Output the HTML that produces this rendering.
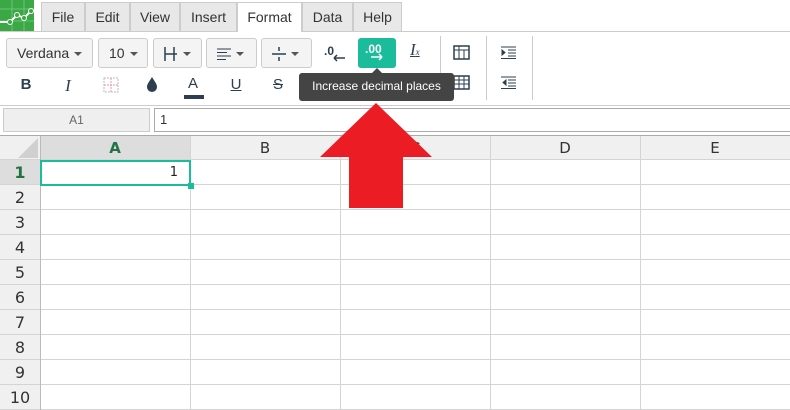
<!DOCTYPE html>
<html><head><style>
*{box-sizing:border-box;margin:0;padding:0}
body{width:790px;height:410px;overflow:hidden;background:#fff;font-family:"Liberation Sans",sans-serif;position:relative}
.a{position:absolute}
.tab{position:absolute;top:2px;height:29px;border:1px solid #ccc;border-bottom:none;background:#e8e8e8;font-size:14px;color:#333;text-align:center;line-height:28px}
.btn{position:absolute;top:38px;height:30px;border:1px solid #ccc;border-radius:3px;background:#f4f4f4;font-size:14px;color:#333;line-height:28px;padding-left:10px}
.car{display:inline-block;border-left:4px solid transparent;border-right:4px solid transparent;border-top:4px solid #555;vertical-align:middle;margin-left:5px}
.ic{position:absolute;font-size:15px;color:#2c3e50;text-align:center;width:20px}
.hl{position:absolute;height:1px;background:#d4d4d4;left:0;width:790px}
.vl{position:absolute;width:1px;background:#d4d4d4;top:136px;height:274px}
.rn{position:absolute;left:0;width:40px;height:25px;font-size:16px;color:#333;text-align:center;line-height:25px;background:#f0f0f0;font-family:"DejaVu Sans",sans-serif}
.cn{position:absolute;top:136px;height:24px;width:150px;font-size:15px;color:#333;text-align:center;line-height:24px;background:#f0f0f0;font-family:"DejaVu Sans",sans-serif}
</style></head><body>
<div class="a" style="left:0;top:31px;width:790px;height:1px;background:#ccc"></div>
<div class="a" style="left:0;top:0;width:34px;height:31px;background:#3aa845"></div>
<svg class="a" style="left:0;top:0" width="34" height="31"><path d="M0 9H34M0 21H34M12 0V31M24 0V31" stroke="#6cc576" stroke-width="1"/><path d="M0 22L10 22L17 15L24 18L32 10" stroke="#fff" stroke-width="2" fill="none"/><circle cx="10" cy="22" r="2.5" fill="#3aa845" stroke="#fff"/><circle cx="17" cy="15" r="2.5" fill="#3aa845" stroke="#fff"/><circle cx="24" cy="18" r="2.5" fill="#3aa845" stroke="#fff"/><circle cx="31" cy="11" r="2.5" fill="#3aa845" stroke="#fff"/></svg>
<div class="tab" style="left:41px;width:44px">File</div>
<div class="tab" style="left:85px;width:45px">Edit</div>
<div class="tab" style="left:130px;width:50px">View</div>
<div class="tab" style="left:180px;width:57px">Insert</div>
<div class="tab" style="left:237px;width:65px;background:#fff;height:30px">Format</div>
<div class="tab" style="left:302px;width:51px">Data</div>
<div class="tab" style="left:353px;width:49px">Help</div>

<div class="btn" style="left:6px;width:87px">Verdana<span class="car"></span></div>
<div class="btn" style="left:98px;width:50px">10<span class="car"></span></div>
<div class="btn" style="left:153px;width:49px"><svg width="14" height="14" style="vertical-align:middle"><path d="M1 0V14M10 0V14M1 7H13" stroke="#2c3e50" stroke-width="1.5"/></svg><span class="car"></span></div>
<div class="btn" style="left:206px;width:51px"><svg width="14" height="12" style="vertical-align:middle"><path d="M0 1H14M0 4.5H10M0 8H14M0 11.5H9" stroke="#2c3e50"/></svg><span class="car"></span></div>
<div class="btn" style="left:261px;width:51px"><svg width="14" height="14" style="vertical-align:middle"><path d="M0 7H14M7 0V4M7 10V14" stroke="#2c3e50" stroke-width="1.5"/></svg><span class="car"></span></div>
<svg class="a" style="left:324px;top:44px" width="22" height="18"><text x="0" y="11" font-size="12" font-weight="bold" fill="#2c3e50" font-family="Liberation Sans">.0</text><path d="M10 14H21M10 14L13 11M10 14L13 17" stroke="#2c3e50" stroke-width="1.5" fill="none"/></svg>
<div class="a" style="left:358px;top:38px;width:38px;height:30px;background:#1abc9c;border-radius:3px"></div>
<svg class="a" style="left:364px;top:42px" width="26" height="20"><text x="1" y="11" font-size="12" font-weight="bold" fill="#fff" font-family="Liberation Sans">.00</text><path d="M7 15H18M18 15L15 12M18 15L15 18" stroke="#fff" stroke-width="1.5" fill="none"/></svg>
<div class="a" style="left:410px;top:40px;font-size:17px;font-style:italic;text-decoration:underline;color:#2c3e50;font-family:'Liberation Serif',serif">I<span style="font-size:9px">x</span></div>
<div class="a" style="left:440px;top:36px;width:1px;height:64px;background:#ccc"></div>
<div class="a" style="left:486px;top:36px;width:1px;height:64px;background:#ccc"></div>
<div class="a" style="left:532px;top:36px;width:1px;height:64px;background:#ccc"></div>
<svg class="a" style="left:453px;top:45px" width="17" height="15"><rect x="1" y="1" width="15" height="13" fill="none" stroke="#2c3e50" stroke-width="1.5"/><path d="M1 5H16M6 1V14M11 5V14" stroke="#2c3e50"/></svg>
<svg class="a" style="left:453px;top:75px" width="17" height="15"><rect x="1" y="1" width="15" height="13" fill="none" stroke="#2c3e50" stroke-width="1.5"/><path d="M1 5H16M1 9H16M6 1V14M11 1V14" stroke="#2c3e50"/></svg>
<svg class="a" style="left:501px;top:46px" width="15" height="13"><path d="M0 1H15M7 4H15M7 7H15M7 10H15M0 12.5H15M1 4L4 6.5L1 9Z" stroke="#2c3e50" fill="#2c3e50"/></svg>
<svg class="a" style="left:501px;top:76px" width="15" height="13"><path d="M0 1H15M7 4H15M7 7H15M7 10H15M0 12.5H15M5 4L2 6.5L5 9Z" stroke="#2c3e50" fill="#2c3e50"/></svg>

<div class="ic" style="left:16px;top:76px;font-weight:bold">B</div>
<div class="ic" style="left:58px;top:76px;font-style:italic;font-family:'Liberation Serif',serif;font-size:17px">I</div>
<svg class="a" style="left:103px;top:77px" width="16" height="16"><rect x="1" y="1" width="14" height="14" fill="none" stroke="#bbb" stroke-dasharray="2 1"/><path d="M8 1V15M1 8H15" stroke="#e9a" stroke-dasharray="2 1"/></svg>
<svg class="a" style="left:145px;top:76px" width="14" height="17"><path d="M7 1C4 6 2 8 2 11A5 5 0 0 0 12 11C12 8 10 6 7 1Z" fill="#2c3e50"/></svg>
<div class="ic" style="left:183px;top:75px;font-size:15px">A</div>
<div class="a" style="left:184px;top:95px;width:20px;height:4px;background:#2c3e50"></div>
<div class="ic" style="left:226px;top:76px;text-decoration:underline">U</div>
<div class="ic" style="left:268px;top:76px;text-decoration:line-through">S</div>

<div class="a" style="left:299px;top:73px;width:155px;height:28px;background:#444;border-radius:3px;color:#fff;font-size:12px;line-height:27px;text-align:center">Increase decimal places</div>
<div class="a" style="left:372px;top:68px;border-left:5px solid transparent;border-right:5px solid transparent;border-bottom:5px solid #444"></div>

<div class="a" style="left:0;top:105px;width:790px;height:1px;background:#ccc"></div>
<div class="a" style="left:3px;top:108px;width:147px;height:24px;background:#efefef;border:1px solid #ccc;font-size:12px;color:#666;text-align:center;line-height:22px">A1</div>
<div class="a" style="left:154px;top:108px;width:640px;height:24px;border:1px solid #aaa;font-size:13px;padding-left:5px;line-height:22px;color:#333">1</div>
<div class="a" style="left:0;top:135px;width:790px;height:1px;background:#aaa"></div>

<div class="a" style="left:0;top:136px;width:40px;height:24px;background:#f0f0f0"></div>
<div class="a" style="left:18px;top:138px;border-left:20px solid transparent;border-bottom:20px solid #d0d0d0"></div>
<div class="cn" style="left:40px;background:#ddd;color:#217346;font-weight:bold">A</div>
<div class="cn" style="left:190px">B</div>
<div class="cn" style="left:340px">C</div>
<div class="cn" style="left:490px">D</div>
<div class="cn" style="left:640px">E</div>
<div class="rn" style="top:160px;background:#ddd;color:#217346;font-weight:bold">1</div>
<div class="rn" style="top:185px">2</div><div class="rn" style="top:210px">3</div><div class="rn" style="top:235px">4</div><div class="rn" style="top:260px">5</div><div class="rn" style="top:285px">6</div><div class="rn" style="top:310px">7</div><div class="rn" style="top:335px">8</div><div class="rn" style="top:360px">9</div><div class="rn" style="top:385px">10</div>
<div class="hl" style="top:159px"></div><div class="hl" style="top:184px"></div><div class="hl" style="top:209px"></div><div class="hl" style="top:234px"></div><div class="hl" style="top:259px"></div><div class="hl" style="top:284px"></div><div class="hl" style="top:309px"></div><div class="hl" style="top:334px"></div><div class="hl" style="top:359px"></div><div class="hl" style="top:384px"></div><div class="hl" style="top:409px"></div>
<div class="vl" style="left:40px;background:#bbb"></div><div class="vl" style="left:190px"></div><div class="vl" style="left:340px"></div><div class="vl" style="left:490px"></div><div class="vl" style="left:640px"></div>
<div class="a" style="left:40px;top:160px;width:151px;height:26px;border:2px solid #1abc9c;font-size:13px;text-align:right;padding-right:11px;line-height:22px;color:#222;font-family:'DejaVu Sans',sans-serif">1</div>
<div class="a" style="left:188px;top:183px;width:6px;height:6px;background:#1abc9c"></div>

<svg class="a" style="left:320px;top:102px" width="120" height="108"><path d="M56 1L112 55H83V106H29V55H0Z" fill="#ec1c24"/></svg>
</body></html>
